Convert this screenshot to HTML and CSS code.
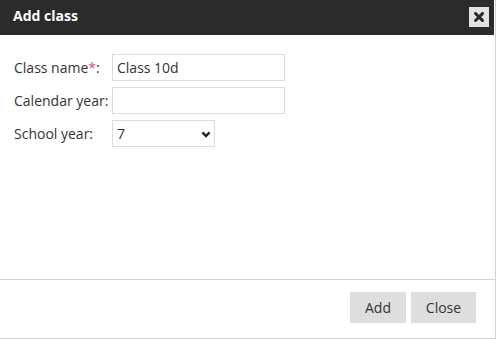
FILE: index.html
```html
<!DOCTYPE html>
<html>
<head>
<meta charset="utf-8">
<link rel="stylesheet" href="styles.css">
</head>
<body>
<div class="dialog">
  <div class="titlebar">
    <span class="title">Add class</span>
    <button class="close-x" aria-label="Close">
      <svg width="10" height="10" viewBox="0 0 10 10"><path d="M1.6 1.6 L8.4 8.4 M8.4 1.6 L1.6 8.4" stroke="#2b2b2b" stroke-width="3" stroke-linecap="square"/></svg>
    </button>
  </div>
  <div class="content">
    <div class="form">
      <label class="lbl">Class name<span class="req">*</span>:</label>
      <input class="field" type="text" value="Class 10d">
      <label class="lbl">Calendar year:</label>
      <input class="field" type="text" value="">
      <label class="lbl">School year:</label>
      <div class="select-wrap">
        <select class="sel">
          <option>7</option>
        </select>
        <svg class="chev" width="10" height="7" viewBox="0 0 10 7"><path d="M1.4 1.4 L5 5 L8.6 1.4" fill="none" stroke="#222" stroke-width="2.4"/></svg>
      </div>
    </div>
  </div>
  <div class="footer">
    <button class="btn">Add</button>
    <button class="btn">Close</button>
  </div>
</div>
</body>
</html>
```
FILE: styles.css
```css
html, body {
  margin: 0;
  padding: 0;
  background: #fff;
}
body {
  font-family: "Open Sans", "Liberation Sans", sans-serif;
  color: #333;
}
.dialog {
  width: 495px;
  height: 338px;
  border-right: 1px solid #d3d3d3;
  border-bottom: 1px solid #d3d3d3;
  display: flex;
  flex-direction: column;
  background: #fff;
}
.titlebar {
  height: 35px;
  background: #2b2b2b;
  display: flex;
  align-items: center;
  justify-content: space-between;
  padding: 0 5px 0 13px;
  margin-right: 1px;
}
.title {
  color: #fff;
  font-weight: 700;
  font-size: 14px;
  position: relative;
  top: -2px;
}
.close-x {
  width: 20px;
  height: 20px;
  padding: 0;
  border: none;
  background: #e3e3e3;
  display: flex;
  align-items: center;
  justify-content: center;
  position: relative;
  top: -1px;
}
.content {
  flex: 1;
  padding: 19px 0 0 14px;
}
.form {
  display: grid;
  grid-template-columns: 98px auto;
  row-gap: 6px;
  align-items: center;
  justify-items: start;
}
.lbl {
  font-size: 14px;
  color: #333;
}
.req {
  color: #e0505a;
}
.field {
  box-sizing: border-box;
  width: 173px;
  height: 27px;
  border: 1px solid #dcdcdc;
  padding: 0 4px;
  font-family: "Open Sans", "Liberation Sans", sans-serif;
  font-size: 14px;
  color: #333;
  margin: 0;
  outline: none;
}
.select-wrap {
  position: relative;
  width: 103px;
  height: 27px;
}
.sel {
  -webkit-appearance: none;
  appearance: none;
  box-sizing: border-box;
  width: 103px;
  height: 27px;
  border: 1px solid #dcdcdc;
  border-radius: 0;
  background: #fff;
  padding: 0 4px;
  margin: 0;
  font-family: "Open Sans", "Liberation Sans", sans-serif;
  font-size: 14px;
  color: #333;
}
.chev {
  position: absolute;
  right: 4px;
  top: 11px;
  pointer-events: none;
}
.footer {
  height: 46px;
  border-top: 1px solid #d3d3d3;
  display: flex;
  justify-content: flex-end;
  align-items: flex-start;
  gap: 5px;
  padding: 12px 19px 0 0;
}
.btn {
  height: 31px;
  border: none;
  background: #dedede;
  font-family: "Open Sans", "Liberation Sans", sans-serif;
  font-size: 14px;
  color: #333;
  padding: 0 14px;
  margin: 0;
}
.btn:first-child {
  width: 56px;
}
.btn:last-child {
  width: 65px;
}
```
